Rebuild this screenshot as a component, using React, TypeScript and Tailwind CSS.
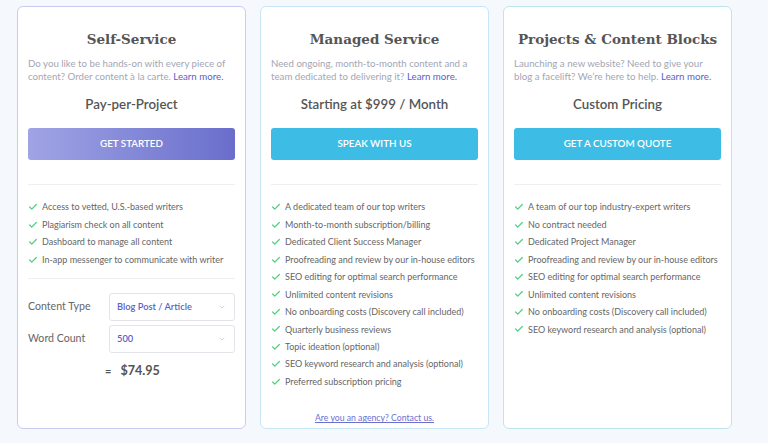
import { Check, ChevronDown } from "lucide-react"

type Plan = {
  title: string
  description: string
  price: string
  cta: string
  border: string
  button: string
  features: string[]
}

const plans: Plan[] = [
  {
    title: "Self-Service",
    description: "Do you like to be hands-on with every piece of content? Order content à la carte.",
    price: "Pay-per-Project",
    cta: "Get Started",
    border: "border-[#c9cbf2]",
    button: "bg-gradient-to-r from-[#a0a4e5] to-[#6a6ecb]",
    features: [
      "Access to vetted, U.S.-based writers",
      "Plagiarism check on all content",
      "Dashboard to manage all content",
      "In-app messenger to communicate with writer",
    ],
  },
  {
    title: "Managed Service",
    description: "Need ongoing, month-to-month content and a team dedicated to delivering it?",
    price: "Starting at $999 / Month",
    cta: "Speak With Us",
    border: "border-[#c8e6f8]",
    button: "bg-[#3dbde5]",
    features: [
      "A dedicated team of our top writers",
      "Month-to-month subscription/billing",
      "Dedicated Client Success Manager",
      "Proofreading and review by our in-house editors",
      "SEO editing for optimal search performance",
      "Unlimited content revisions",
      "No onboarding costs (Discovery call included)",
      "Quarterly business reviews",
      "Topic ideation (optional)",
      "SEO keyword research and analysis (optional)",
      "Preferred subscription pricing",
    ],
  },
  {
    title: "Projects & Content Blocks",
    description: "Launching a new website? Need to give your blog a facelift? We’re here to help.",
    price: "Custom Pricing",
    cta: "Get a Custom Quote",
    border: "border-[#bde6ea]",
    button: "bg-[#3dbde5]",
    features: [
      "A team of our top industry-expert writers",
      "No contract needed",
      "Dedicated Project Manager",
      "Proofreading and review by our in-house editors",
      "SEO editing for optimal search performance",
      "Unlimited content revisions",
      "No onboarding costs (Discovery call included)",
      "SEO keyword research and analysis (optional)",
    ],
  },
]

function SelectBox({ value }: { value: string }) {
  return (
    <div className="flex h-[28px] flex-1 items-center justify-between rounded-[3px] border border-[#e3e4ea] bg-white pl-[7px] pr-[8px]">
      <span className="text-[9.3px] font-semibold text-[#5b5fc8]">{value}</span>
      <ChevronDown size={8} strokeWidth={1.5} className="text-[#a8a8b0]" />
    </div>
  )
}

function Calculator() {
  return (
    <>
      <div className="mt-[10px] h-px bg-[#eeeff2]" />
      <div className="mt-[14px] flex flex-col gap-[4px]">
        <div className="flex items-center">
          <span className="w-[81px] text-[10.6px] text-[#666]">Content Type</span>
          <SelectBox value="Blog Post / Article" />
        </div>
        <div className="flex items-center">
          <span className="w-[81px] text-[10.6px] text-[#666]">Word Count</span>
          <SelectBox value="500" />
        </div>
      </div>
      <div className="mt-[8px] flex h-[20px] items-center pl-[77px] text-[#555]">
        <span className="text-[11px] font-bold">=</span>
        <span className="ml-[9px] text-[12.6px] font-bold">$74.95</span>
      </div>
    </>
  )
}

function PlanCard({ plan, index }: { plan: Plan; index: number }) {
  return (
    <div className={`flex w-[229px] flex-col rounded-[6px] border bg-white px-[10px] pt-[20px] pb-[3px] ${plan.border}`}>
      <h2 className="text-center text-[13.5px] leading-[24px] font-bold text-[#555] [font-family:'DejaVu_Serif',serif]">
        {plan.title}
      </h2>
      <p className="mt-[5.5px] text-[9.7px] leading-[13px] text-[#a3a6b4]">
        {plan.description} <span className="text-[#5b5fc7]">Learn more.</span>
      </p>
      <div className="mt-[11px] text-center text-[13.3px] leading-[20px] font-semibold text-[#555]">{plan.price}</div>
      <button className={`mt-[14px] h-[32px] w-full rounded-[3px] text-[9.8px] font-semibold text-white uppercase ${plan.button}`}>
        {plan.cta}
      </button>
      <div className="mt-[24px] h-px bg-[#eeeff2]" />
      <ul className="mt-[14px]">
        {plan.features.map((f) => (
          <li key={f} className="flex h-[17.45px] items-center gap-[4px] text-[9px] text-[#666]">
            <Check size={10} strokeWidth={3} className="shrink-0 text-[#4fd07f]" />
            <span>{f}</span>
          </li>
        ))}
      </ul>
      {index === 0 && <Calculator />}
      {index === 1 && (
        <a className="mt-auto pt-[21px] text-center text-[8.7px] leading-[14px] text-[#6b6fd2] underline">
          Are you an agency? Contact us.
        </a>
      )}
    </div>
  )
}

export default function App() {
  return (
    <div className="h-[443px] w-[768px] overflow-hidden bg-[#f5f8fd] pt-[6px] pl-[17px] [font-family:Lato,'Noto_Sans',sans-serif]">
      <div className="flex items-stretch gap-[14px]">
        {plans.map((p, i) => (
          <PlanCard key={p.title} plan={p} index={i} />
        ))}
      </div>
    </div>
  )
}
